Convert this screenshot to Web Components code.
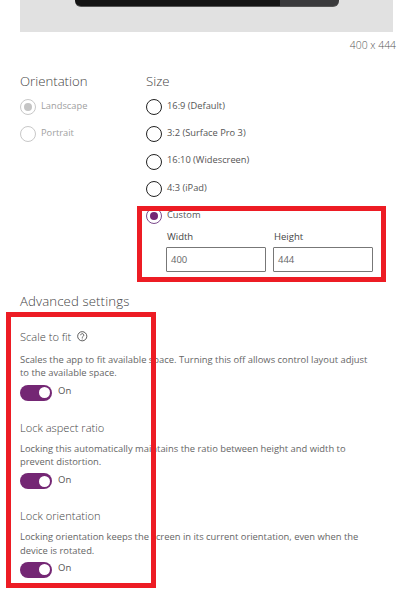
<!DOCTYPE html>
<html>
<head>
  <title>Display settings</title>
  <style>
    html, body { margin: 0; height: 596px; overflow: hidden; background: #fff; }
    body { font-family: "Open Sans", "Noto Sans", sans-serif; }
  </style>
</head>
<body>
  <display-settings></display-settings>

  <script>
    const FONT = `"Open Sans", "Noto Sans", sans-serif`

    customElements.define('radio-row', class extends HTMLElement {
      constructor() {
        super()
        this.attachShadow({ mode: 'open' }).innerHTML = `
          <style>
            :host { display: flex; align-items: center; gap: 5px; height: 27.3px; font: 400 9.3px ${FONT}; color: #555; }
            .dot { width: 16px; height: 16px; box-sizing: border-box; border: 1.2px solid #222; border-radius: 50%; flex: none; display: grid; place-items: center; background: #fff; }
            .label { position: relative; top: -2px; white-space: nowrap; }
            :host([checked]) .dot { border-color: #7b4a8c; }
            :host([checked]) .dot::after { content: ''; width: 8px; height: 8px; border-radius: 50%; background: #742774; }
            :host([disabled]) { color: #a0a0a0; }
            :host([disabled]) .dot { border-color: #c8c8c8; }
            :host([disabled][checked]) .dot::after { background: #c4c4c4; }
          </style>
          <span class="dot"></span><span class="label"><slot></slot></span>`
      }
    })

    customElements.define('toggle-setting', class extends HTMLElement {
      constructor() {
        super()
        this.attachShadow({ mode: 'open' }).innerHTML = `
          <style>
            :host { display: block; font-family: ${FONT}; }
            .title { display: flex; align-items: center; gap: 6px; height: 18px; font-size: 11.1px; font-weight: 300; color: #444; }
            .desc { margin: 5.2px 0 0; width: 350px; font-size: 9.4px; line-height: 13.4px; color: #666; font-weight: 400; }
            :host([help]) .desc { margin-top: 7.5px; }
            .row { display: flex; align-items: center; gap: 6px; margin-top: 5px; height: 16px; font-size: 9.5px; color: #555; }
            .track { width: 32px; height: 16px; border-radius: 8px; background: #742774; display: flex; justify-content: flex-end; align-items: center; padding-right: 2.5px; box-sizing: border-box; }
            .track::after { content: ''; width: 11px; height: 11px; border-radius: 50%; background: #fff; }
            .on { position: relative; top: -2px; }
          </style>
          <div class="title"><slot name="title"></slot></div>
          <p class="desc"><slot></slot></p>
          <div class="row"><span class="track"></span><span class="on">On</span></div>`
      }
    })

    customElements.define('size-field', class extends HTMLElement {
      constructor() {
        super()
        this.attachShadow({ mode: 'open' }).innerHTML = `
          <style>
            :host { display: block; width: 100px; font-family: ${FONT}; }
            .label { font-size: 9.5px; font-weight: 500; color: #444; height: 15px; line-height: 13px; padding-left: 1px; }
            .box { margin-top: 2px; height: 25px; box-sizing: border-box; border: 1px solid #777; border-radius: 1px; padding: 0 4px; display: flex; align-items: center; font-size: 9.5px; color: #666; }
          </style>
          <div class="label"><slot name="label"></slot></div>
          <div class="box"><slot></slot></div>`
      }
    })

    customElements.define('display-settings', class extends HTMLElement {
      constructor() {
        super()
        this.attachShadow({ mode: 'open' }).innerHTML = `
          <style>
            :host { display: block; position: relative; width: 417px; height: 596px; overflow: hidden; font-family: ${FONT}; }
            .preview { margin-left: 20px; width: 373px; height: 32px; background: #e1e1e1; display: flex; justify-content: center; box-sizing: border-box; }
            .device { width: 264px; height: 7px; background: linear-gradient(90deg, #141414 0 77.6%, #3a3a3c 77.6%); border-radius: 0 0 6px 6px; border-bottom: 1px solid #555; box-sizing: border-box; }
            .dims { margin: 7px 21px 0 0; text-align: right; font-size: 10.4px; font-weight: 300; line-height: 13px; color: #555; }
            .cols { display: flex; margin: 20px 0 0 20px; }
            .orient { width: 126px; }
            h2 { margin: 0; font-size: 13.2px; line-height: 18px; font-weight: 300; color: #444; }
            .list { margin-top: 3.5px; }
            .fields { display: flex; gap: 7px; margin: 0 0 0 20px; }
            .adv { margin: 20.5px 0 0 20px; }
            .adv h2 { margin-bottom: 17px; letter-spacing: .12px; }
            toggle-setting + toggle-setting { margin-top: 17.6px; }
            .mark { position: absolute; border: 5px solid #ed1c24; box-sizing: border-box; pointer-events: none; }
            .m1 { left: 137px; top: 206px; width: 249px; height: 76px; }
            .m2 { left: 6px; top: 312px; width: 150px; height: 276px; }
          </style>
          <div class="preview"><div class="device"></div></div>
          <div class="dims">400 x 444</div>
          <div class="cols">
            <div class="orient">
              <h2>Orientation</h2>
              <div class="list">
                <radio-row disabled checked>Landscape</radio-row>
                <radio-row disabled>Portrait</radio-row>
              </div>
            </div>
            <div>
              <h2>Size</h2>
              <div class="list">
                <radio-row>16:9 (Default)</radio-row>
                <radio-row>3:2 (Surface Pro 3)</radio-row>
                <radio-row>16:10 (Widescreen)</radio-row>
                <radio-row>4:3 (iPad)</radio-row>
                <radio-row checked>Custom</radio-row>
              </div>
              <div class="fields">
                <size-field><span slot="label">Width</span>400</size-field>
                <size-field><span slot="label">Height</span>444</size-field>
              </div>
            </div>
          </div>
          <div class="adv">
            <h2>Advanced settings</h2>
            <toggle-setting help>
              <span slot="title" style="display:flex;align-items:center;gap:6px">Scale to fit
                <svg style="width:10.5px;height:10.5px;flex:none" viewBox="0 0 11 11" fill="none" stroke="#444" stroke-width=".9"><circle cx="5.5" cy="5.5" r="4.8"/><path d="M3.9 4.4a1.6 1.6 0 1 1 2.5 1.3c-.6.4-.9.7-.9 1.3"/><path d="M5.5 7.9v.9"/></svg>
              </span>
              Scales the app to fit available space. Turning this off allows control layout adjust to the available space.
            </toggle-setting>
            <toggle-setting>
              <span slot="title">Lock aspect ratio</span>
              Locking this automatically maintains the ratio between height and width to prevent distortion.
            </toggle-setting>
            <toggle-setting>
              <span slot="title">Lock orientation</span>
              Locking orientation keeps the screen in its current orientation, even when the device is rotated.
            </toggle-setting>
          </div>
          <div class="mark m1"></div>
          <div class="mark m2"></div>`
      }
    })
  </script>
</body>
</html>
